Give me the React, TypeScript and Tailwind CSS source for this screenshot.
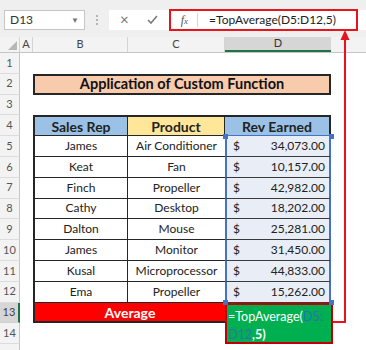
import React from 'react';

// sample data for the sheet
const data = [
  ['James', 'Air Conditioner', '34,073.00'],
  ['Keat', 'Fan', '10,157.00'],
  ['Finch', 'Propeller', '42,982.00'],
  ['Cathy', 'Desktop', '18,202.00'],
  ['Dalton', 'Mouse', '25,281.00'],
  ['James', 'Monitor', '31,450.00'],
  ['Kusal', 'Microprocessor', '44,833.00'],
  ['Ema', 'Propeller', '15,262.00'],
];

const RowHead: React.FC<{ n?: number; active?: boolean }> = ({ n, active }) => (
  <div
    className={
      active
        ? 'w-[20px] shrink-0 flex items-center justify-center bg-[#d6d6d6] border-r-2 border-r-[#217346] border-b border-b-[#d0d0d0] text-[11px] text-[#444]'
        : 'w-[20px] shrink-0 flex items-center justify-center bg-[#f3f3f3] border-r border-r-[#c6c6c6] border-b border-b-[#dcdcdc] text-[11px] text-[#555]'
    }
  >
    {n}
  </div>
);

const Row: React.FC<{ n?: number; active?: boolean; children?: React.ReactNode }> = ({ n, active, children }) => (
  <div className="flex h-[20.8px]">
    <RowHead n={n} active={active} />
    <div className="w-[13px] shrink-0" />
    {children}
    <div className="flex-1" />
  </div>
);

const App: React.FC = () => {
  return (
    <div className="relative w-[366px] h-[350px] overflow-hidden bg-white font-['Lato','Open_Sans',sans-serif] text-[#222]">
      {/* toolbar */}
      <div className="h-[37px] bg-[#efefef] flex items-center pt-[2px]">
        <div className="ml-[4px] w-[81px] h-[20px] bg-white border border-[#c6c6c6] flex items-center justify-between px-[5px] text-[12px] text-[#333]">
          <span>D13</span>
          <span className="text-[8px] text-[#777]">▼</span>
        </div>
        <div className="ml-[11px] flex flex-col gap-[2px]">
          <span className="w-[2px] h-[2px] bg-[#b5b5b5]" />
          <span className="w-[2px] h-[2px] bg-[#b5b5b5]" />
          <span className="w-[2px] h-[2px] bg-[#b5b5b5]" />
        </div>
        <div className="ml-[11px] flex-1 h-[20px] bg-white flex items-center">
          <span className="ml-[11px] text-[15px] text-[#777] leading-none">×</span>
          <svg className="ml-[18px]" width="11" height="9" viewBox="0 0 11 9">
            <path d="M1 5 L4 8 L10 1" fill="none" stroke="#7a7a7a" strokeWidth="1.6" />
          </svg>
          <div className="ml-[11px] w-[189px] h-[22px] border-2 border-[#e8141b] flex items-center">
            <span className="ml-[10px] text-[12px] italic text-[#555] font-['Liberation_Serif',serif]">
              f<span className="text-[9px]">x</span>
            </span>
            <span className="ml-[9px] w-px h-[14px] bg-[#d4d4d4]" />
            <span className="ml-[11px] text-[12px] text-[#222]">=TopAverage(D5:D12,5)</span>
          </div>
        </div>
      </div>

      {/* column headers */}
      <div className="flex h-[16px] bg-[#f3f3f3] border-b border-[#c6c6c6] text-[11px] text-[#444]">
        <div className="w-[20px] shrink-0 border-r border-[#d4d4d4] flex items-end justify-end p-[2px]">
          <div className="w-0 h-0 border-l-[9px] border-l-transparent border-b-[9px] border-b-[#b8b8b8]" />
        </div>
        <div className="w-[13px] shrink-0 border-r border-[#d4d4d4] flex items-center justify-center">A</div>
        <div className="w-[95px] shrink-0 border-r border-[#d4d4d4] flex items-center justify-center">B</div>
        <div className="w-[97px] shrink-0 border-r border-[#d4d4d4] flex items-center justify-center">C</div>
        <div className="w-[106px] shrink-0 bg-[#d6d6d6] border-b-2 border-[#217346] flex items-center justify-center text-[#333]">
          D
        </div>
        <div className="flex-1" />
      </div>

      {/* grid */}
      <Row n={1} />
      <Row n={2}>
        <div className="w-[298px] shrink-0 bg-[#f8cbad] border-2 border-[#262626] flex items-center justify-center text-[14.5px] font-bold text-[#111]">
          Application of Custom Function
        </div>
      </Row>
      <Row n={3} />
      <Row n={4}>
        <div className="w-[95px] shrink-0 bg-[#9bc2e6] border-l-2 border-t-2 border-r border-b border-[#262626] flex items-center justify-center text-[14px] font-bold">
          Sales Rep
        </div>
        <div className="w-[97px] shrink-0 bg-[#ffe699] border-t-2 border-r border-b border-[#262626] flex items-center justify-center text-[14px] font-bold">
          Product
        </div>
        <div className="w-[106px] shrink-0 bg-[#9bc2e6] border-t-2 border-r-2 border-b border-[#262626] border-b-[#4472c4] flex items-center justify-center text-[14px] font-bold">
          Rev Earned
        </div>
      </Row>
      {data.map((r, i) => (
        <Row key={i} n={i + 5}>
          <div className="w-[95px] shrink-0 border-l-2 border-r border-b border-[#262626] flex items-center justify-center text-[12px]">
            {r[0]}
          </div>
          <div className="w-[97px] shrink-0 border-b border-[#262626] flex items-center justify-center text-[12px]">
            {r[1]}
          </div>
          <div className="w-[106px] shrink-0 bg-[#e9eef6] border-l-2 border-r-2 border-l-[#4472c4] border-r-[#4472c4] border-b border-b-[#3a3a3a] flex items-center justify-between pl-[6px] pr-[4px] text-[12px]">
            <span>$</span>
            <span>{r[2]}</span>
          </div>
        </Row>
      ))}
      <Row n={13} active>
        <div className="w-[192px] shrink-0 bg-[#ff0000] border-l-2 border-b-2 border-[#262626] flex items-center justify-center pt-[2px] text-[14px] font-bold text-white">
          Average
        </div>
        <div className="relative w-[106px] shrink-0">
          {/* cell in edit mode */}
          <div className="absolute left-0 top-0 w-[108px] h-[41px] bg-[#00b050] border-2 border-[#c00000] pl-[1px] pt-[3px] text-[12.5px] leading-[18px] text-white">
            <div>
              =TopAverage(<span className="text-[#2f6fb8]">D5:</span>
            </div>
            <div>
              <span className="text-[#2f6fb8]">D12</span>
              <span className="font-bold">,5)</span>
            </div>
          </div>
        </div>
      </Row>
      <Row n={14} />
      <Row />

      {/* selection handles */}
      <span className="absolute left-[223px] top-[134px] w-[5px] h-[5px] bg-[#4472c4]" />
      <span className="absolute left-[329px] top-[134px] w-[5px] h-[5px] bg-[#4472c4]" />
      <span className="absolute left-[223px] top-[300px] w-[5px] h-[5px] bg-[#4472c4]" />
      <span className="absolute left-[329px] top-[300px] w-[5px] h-[5px] bg-[#4472c4]" />

      {/* red arrow */}
      <svg className="absolute left-0 top-0 pointer-events-none" width="366" height="350">
        <path d="M345 38 L345 322 L333 322" fill="none" stroke="#e8141b" strokeWidth="2" />
        <polygon points="345,30 340.5,40 349.5,40" fill="#e8141b" />
      </svg>
    </div>
  );
};

export default App;
